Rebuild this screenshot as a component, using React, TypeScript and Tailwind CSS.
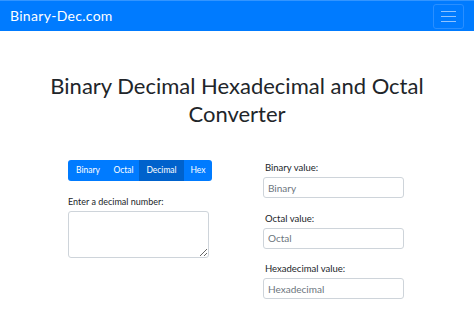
const font = { fontFamily: 'Lato, "Noto Sans", sans-serif' };

const tabs = ["Binary", "Octal", "Decimal", "Hex"];

const OutputField = ({ label, placeholder }: { label: string; placeholder: string }) => (
  <div className="flex flex-col">
    <label className="text-[9.5px] leading-[13px] text-[#212529] mb-[3px] pl-[2px]">{label}</label>
    <input
      readOnly
      placeholder={placeholder}
      className="w-[141px] h-[21px] px-[4px] text-[10px] border border-[#ced4da] rounded-[3px] bg-white placeholder:text-[#6c757d] outline-none"
    />
  </div>
);

export default function App() {
  return (
    <div className="w-[474px] h-[323px] bg-white overflow-hidden" style={font}>
      {/* navbar */}
      <nav className="h-[31px] bg-[#007bff] border-t border-t-[#3395ff] flex items-center justify-between pl-[10px] pr-[10px]">
        <span className="text-white text-[14px] tracking-[0.3px] leading-none">Binary-Dec.com</span>
        <button className="w-[31px] h-[25px] border border-[#2a8fff] rounded-[3px] flex flex-col items-center justify-center gap-[4px]">
          <span className="block w-[15px] h-[1px] bg-[#8fc3ff]" />
          <span className="block w-[15px] h-[1px] bg-[#8fc3ff]" />
          <span className="block w-[15px] h-[1px] bg-[#8fc3ff]" />
        </button>
      </nav>

      <h1 className="mt-[41px] text-center text-[22px] leading-[28px] text-[#212529] font-normal">
        Binary Decimal Hexadecimal and Octal
        <br />
        Converter
      </h1>

      <div className="mt-[26px] flex pl-[68px] gap-[51px]">
        {/* left column */}
        <div className="flex flex-col w-[144px] pt-[6px]">
          <div className="flex h-[21px] rounded-[3px] overflow-hidden bg-[#007bff] text-white text-[8.5px] w-[144px]">
            {tabs.map((t) => (
              <span
                key={t}
                className={
                  "flex items-center justify-center " +
                  (t === "Decimal" ? "bg-[#0062cc] w-[45px]" : t === "Binary" ? "w-[40px]" : t === "Octal" ? "w-[31px]" : "w-[28px]")
                }
              >
                {t}
              </span>
            ))}
          </div>
          <label className="mt-[14px] text-[9px] leading-[13px] text-[#212529]">Enter a decimal number:</label>
          <textarea className="mt-[3px] w-[141px] h-[47px] border border-[#ced4da] rounded-[3px] outline-none resize-y" />
        </div>

        {/* right column */}
        <div className="flex flex-col gap-[13.5px] pt-[7px]">
          <OutputField label="Binary value:" placeholder="Binary" />
          <OutputField label="Octal value:" placeholder="Octal" />
          <OutputField label="Hexadecimal value:" placeholder="Hexadecimal" />
        </div>
      </div>
    </div>
  );
}
